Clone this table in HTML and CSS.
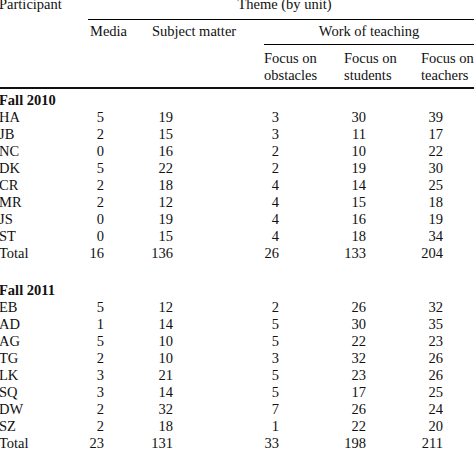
FILE: index.html
```html
<!DOCTYPE html>
<html>
<head>
<meta charset="utf-8">
<link rel="stylesheet" href="styles.css">
</head>
<body>
<div class="page">
<table class="data">
  <colgroup>
    <col class="w1"><col class="w2"><col class="w3"><col class="w4"><col class="w5"><col class="w6">
  </colgroup>
  <thead>
    <tr>
      <th rowspan="3" class="part">Participant</th>
      <th colspan="5" class="theme">Theme (by unit)</th>
    </tr>
    <tr>
      <th rowspan="2" class="sub">Media</th>
      <th rowspan="2" class="sub">Subject matter</th>
      <th colspan="3" class="wot">Work of teaching</th>
    </tr>
    <tr>
      <th class="focus">Focus on<br>obstacles</th>
      <th class="focus">Focus on<br>students</th>
      <th class="focus">Focus on<br>teachers</th>
    </tr>
  </thead>
  <tbody>
    <tr class="group first"><th colspan="6">Fall 2010</th></tr>
    <tr><td>HA</td><td>5</td><td>19</td><td>3</td><td>30</td><td>39</td></tr>
    <tr><td>JB</td><td>2</td><td>15</td><td>3</td><td>11</td><td>17</td></tr>
    <tr><td>NC</td><td>0</td><td>16</td><td>2</td><td>10</td><td>22</td></tr>
    <tr><td>DK</td><td>5</td><td>22</td><td>2</td><td>19</td><td>30</td></tr>
    <tr><td>CR</td><td>2</td><td>18</td><td>4</td><td>14</td><td>25</td></tr>
    <tr><td>MR</td><td>2</td><td>12</td><td>4</td><td>15</td><td>18</td></tr>
    <tr><td>JS</td><td>0</td><td>19</td><td>4</td><td>16</td><td>19</td></tr>
    <tr><td>ST</td><td>0</td><td>15</td><td>4</td><td>18</td><td>34</td></tr>
    <tr><td>Total</td><td>16</td><td>136</td><td>26</td><td>133</td><td>204</td></tr>
    <tr class="group second"><th colspan="6">Fall 2011</th></tr>
    <tr><td>EB</td><td>5</td><td>12</td><td>2</td><td>26</td><td>32</td></tr>
    <tr><td>AD</td><td>1</td><td>14</td><td>5</td><td>30</td><td>35</td></tr>
    <tr><td>AG</td><td>5</td><td>10</td><td>5</td><td>22</td><td>23</td></tr>
    <tr><td>TG</td><td>2</td><td>10</td><td>3</td><td>32</td><td>26</td></tr>
    <tr><td>LK</td><td>3</td><td>21</td><td>5</td><td>23</td><td>26</td></tr>
    <tr><td>SQ</td><td>3</td><td>14</td><td>5</td><td>17</td><td>25</td></tr>
    <tr><td>DW</td><td>2</td><td>32</td><td>7</td><td>26</td><td>24</td></tr>
    <tr><td>SZ</td><td>2</td><td>18</td><td>1</td><td>22</td><td>20</td></tr>
    <tr><td>Total</td><td>23</td><td>131</td><td>33</td><td>198</td><td>211</td></tr>
  </tbody>
</table>
</div>
</body>
</html>
```
FILE: styles.css
```css
html, body {
  margin: 0;
  padding: 0;
  background: #fff;
}

.page {
  width: 474px;
  height: 450px;
  overflow: hidden;
}

.data {
  border-collapse: separate;
  border-spacing: 0;
  table-layout: fixed;
  width: 482px;
  margin: -4px 0 0 -1px;
  font-family: "Liberation Serif", "Times New Roman", serif;
  font-size: 14.5px;
  line-height: 17px;
  color: #111;
}

.w1 { width: 89px; }
.w2 { width: 62px; }
.w3 { width: 114px; }
.w4 { width: 80px; }
.w5 { width: 77px; }
.w6 { width: 60px; }

.data th,
.data td {
  padding: 0;
  font-weight: normal;
  text-align: left;
  vertical-align: top;
  white-space: nowrap;
}

.data .theme {
  text-align: center;
  padding-bottom: 6px;
  border-bottom: 1px solid #000;
}

.data .sub {
  padding-top: 3px;
  padding-left: 2px;
}

.data .wot {
  text-align: center;
  padding: 3px 7px 4px 0;
  border-bottom: 1px solid #000;
}

.data .focus {
  line-height: 16.5px;
  padding-top: 5px;
  padding-bottom: 4px;
}

.data .group th {
  font-weight: bold;
}

.data .first th {
  padding-top: 3px;
  border-top: 2px solid #111;
}

.data .second th {
  padding-top: 19.5px;
}

.data tbody td:nth-child(n+2) {
  text-align: right;
}

.data tbody td:nth-child(2) { padding-right: 46px; }
.data tbody td:nth-child(3) { padding-right: 91px; }
.data tbody td:nth-child(4) { padding-right: 65px; }
.data tbody td:nth-child(5) { padding-right: 55px; }
.data tbody td:nth-child(6) { padding-right: 38px; }
```
